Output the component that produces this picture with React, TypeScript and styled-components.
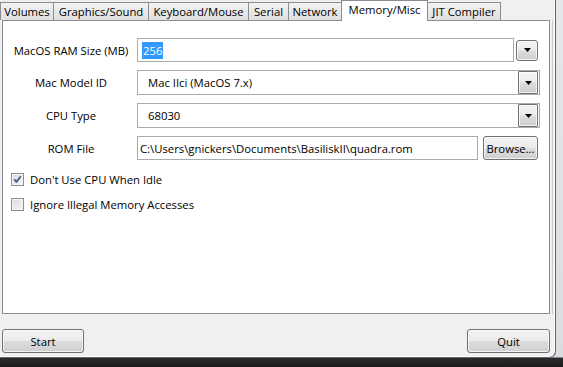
import React from 'react';
import styled, {createGlobalStyle} from 'styled-components';

const GlobalStyle = createGlobalStyle`
  html, body {
    margin: 0;
    padding: 0;
    background: #1d1d1d;
  }
  body {
    font-family: "Open Sans", "Noto Sans", sans-serif;
    font-size: 11.3px;
    color: #000;
  }
`;

const Screen = styled.div`
  width: 563px;
  height: 367px;
  overflow: hidden;
  background: linear-gradient(to bottom, #e4e8ed 0, #d9dde2 357px, #2c2c2c 358px, #1b1b1b 100%);
`;

const Window = styled.div`
  width: 553px;
  height: 357px;
  padding-left: 2px;
  background: #f0f0f0;
  border-right: 1px solid #5d6570;
  border-bottom: 1px solid #5d6570;
  border-bottom-right-radius: 7px;
  box-shadow: inset -1px -1px 0 #fdfdfd;
  display: flex;
  flex-direction: column;
`;

const TabBar = styled.div`
  display: flex;
  align-items: flex-end;
  height: 20px;
  margin-left: -2px;
  position: relative;
  z-index: 1;
`;

const Tab = styled.div<{$w: number; $active?: boolean}>`
  box-sizing: border-box;
  width: ${p => p.$w}px;
  height: ${p => (p.$active ? 21 : 18)}px;
  margin-right: -1px;
  margin-bottom: ${p => (p.$active ? -1 : 0)}px;
  border: 1px solid #898c95;
  border-bottom: none;
  background: ${p => (p.$active ? '#fff' : 'linear-gradient(#f4f4f4, #e8e8e8 50%, #e0e0e0)')};
  display: flex;
  align-items: center;
  justify-content: center;
  padding-bottom: ${p => (p.$active ? 3 : 0)}px;
  white-space: nowrap;
  position: relative;
  z-index: ${p => (p.$active ? 2 : 1)};
`;

const Panel = styled.div`
  box-sizing: border-box;
  width: 548px;
  height: 294px;
  background: #fff;
  border: 1px solid #898c95;
  box-shadow: 2px 0 0 #f0f0f0, 3px 0 0 #c9cbce;
  padding: 17px 9px 0 9px;
`;

const Form = styled.div`
  display: grid;
  grid-template-columns: 118px 1fr;
  column-gap: 7px;
  row-gap: 8px;
  align-items: center;
`;

const Label = styled.div`
  text-align: center;
  white-space: nowrap;
`;

const FieldRow = styled.div<{$gap: number; $trail: number}>`
  display: flex;
  align-items: center;
  gap: ${p => p.$gap}px;
  padding-right: ${p => p.$trail}px;
  height: 24px;
`;

const TextBox = styled.div<{$pad: number}>`
  flex: 1;
  box-sizing: border-box;
  height: 24px;
  border: 1px solid #aaabad;
  padding-left: ${p => p.$pad}px;
  display: flex;
  align-items: center;
  white-space: nowrap;
  overflow: hidden;
`;

const Selected = styled.span`
  background: #3399ff;
  color: #fff;
  padding: 1px 1px 1px 1px;
`;

const Combo = styled.div`
  box-sizing: border-box;
  height: 25px;
  border: 1px solid #aaabad;
  padding-left: 10px;
  display: flex;
  align-items: center;
  justify-content: space-between;
`;

const ArrowButton = styled.div<{$w: number; $h: number; $r: number}>`
  box-sizing: border-box;
  width: ${p => p.$w}px;
  height: ${p => p.$h}px;
  border: 1px solid #707070;
  border-radius: ${p => p.$r}px;
  background: linear-gradient(#f4f4f4, #ececec 45%, #dcdcdc 55%, #cdcdcd);
  box-shadow: inset 0 0 0 1px rgba(255, 255, 255, 0.75);
  display: flex;
  align-items: center;
  justify-content: center;
  flex: none;
  margin-right: 1px;
`;

const PushButton = styled.div<{$w: number}>`
  box-sizing: border-box;
  width: ${p => p.$w}px;
  height: 24px;
  border: 1px solid #707070;
  border-radius: 3px;
  background: linear-gradient(#f3f3f3, #ebebeb 48%, #dddddd 52%, #cfcfcf);
  box-shadow: inset 0 0 0 1px rgba(255, 255, 255, 0.7);
  display: flex;
  align-items: center;
  justify-content: center;
  flex: none;
`;

const CheckList = styled.div`
  margin: 9px 0 0 -1px;
  display: flex;
  flex-direction: column;
  gap: 5px;
`;

const CheckRow = styled.div`
  height: 20px;
  display: flex;
  align-items: center;
  gap: 6px;
`;

const Box = styled.div`
  box-sizing: border-box;
  width: 13px;
  height: 13px;
  border: 1px solid #8e8f8f;
  background: linear-gradient(135deg, #d9d9d9, #f6f6f6);
  box-shadow: inset 0 0 0 1px #f4f4f4;
  position: relative;
  svg {
    position: absolute;
    left: 0;
    top: 0;
  }
`;

const BottomBar = styled.div`
  display: flex;
  justify-content: space-between;
  width: 548px;
  padding-top: 15px;
`;

const Arrow = () => (
  <svg width="7" height="4" viewBox="0 0 7 4">
    <path d="M0 0h7L3.5 4z" fill="#000" />
  </svg>
);

const Check = ({checked}: {checked?: boolean}) => (
  <Box>
    {checked && (
      <svg width="11" height="11" viewBox="0 0 11 11">
        <path d="M2.2 5.4 L4.4 7.9 L8.8 2.4" fill="none" stroke="#42598f" strokeWidth="1.7" />
      </svg>
    )}
  </Box>
);

const tabs = [
  {name: 'Volumes', w: 54},
  {name: 'Graphics/Sound', w: 96},
  {name: 'Keyboard/Mouse', w: 101},
  {name: 'Serial', w: 41},
  {name: 'Network', w: 54},
  {name: 'Memory/Misc', w: 87, active: true},
  {name: 'JIT Compiler', w: 74},
];

export default function App() {
  return (
    <Screen>
      <GlobalStyle />
      <Window>
        <TabBar>
          {tabs.map(t => (
            <Tab key={t.name} $w={t.w} $active={t.active}>
              {t.name}
            </Tab>
          ))}
        </TabBar>
        <Panel>
          <Form>
            <Label>MacOS RAM Size (MB)</Label>
            <FieldRow $gap={2} $trail={1}>
              <TextBox $pad={4}>
                <Selected>256</Selected>
              </TextBox>
              <ArrowButton $w={22} $h={21} $r={3}>
                <Arrow />
              </ArrowButton>
            </FieldRow>

            <Label>Mac Model ID</Label>
            <Combo>
              Mac IIci (MacOS 7.x)
              <ArrowButton $w={20} $h={23} $r={1}>
                <Arrow />
              </ArrowButton>
            </Combo>

            <Label>CPU Type</Label>
            <Combo>
              68030
              <ArrowButton $w={20} $h={23} $r={1}>
                <Arrow />
              </ArrowButton>
            </Combo>

            <Label>ROM File</Label>
            <FieldRow $gap={5} $trail={2}>
              <TextBox $pad={2}>C:\Users\gnickers\Documents\BasiliskII\quadra.rom</TextBox>
              <PushButton $w={55}>Browse...</PushButton>
            </FieldRow>
          </Form>

          <CheckList>
            <CheckRow>
              <Check checked />
              Don't Use CPU When Idle
            </CheckRow>
            <CheckRow>
              <Check />
              Ignore Illegal Memory Accesses
            </CheckRow>
          </CheckList>
        </Panel>
        <BottomBar>
          <PushButton $w={82}>Start</PushButton>
          <PushButton $w={83}>Quit</PushButton>
        </BottomBar>
      </Window>
    </Screen>
  );
}
